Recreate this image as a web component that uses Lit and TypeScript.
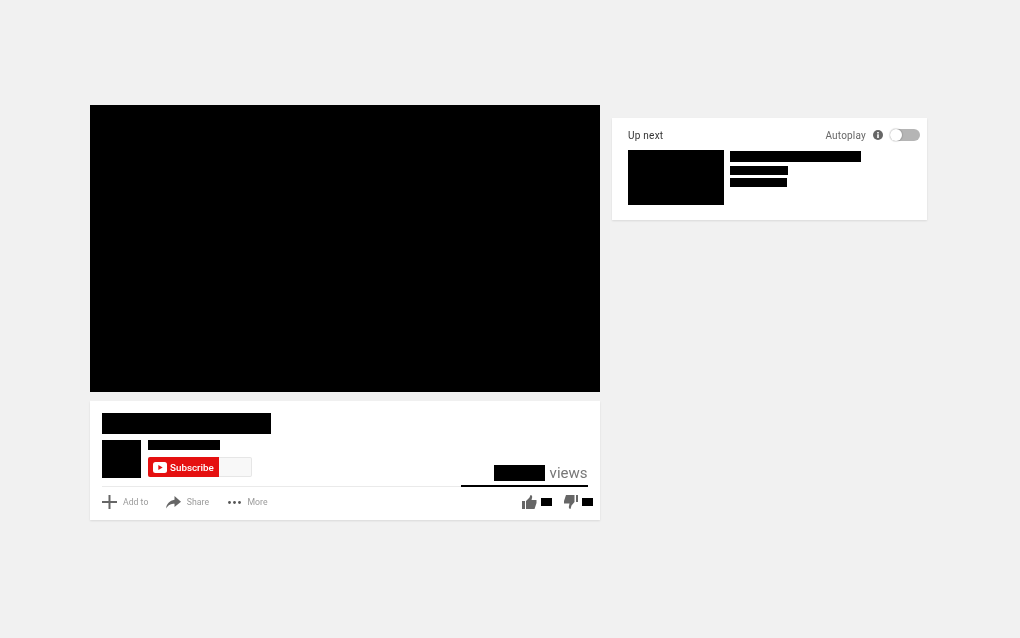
import { LitElement, html, css } from "lit";
import { customElement } from "lit/decorators.js";

@customElement("app-root")
export class AppRoot extends LitElement {
  static styles = css`
    :host { display: block; width: 1020px; height: 638px; background: #f1f1f1; font-family: Roboto, "Liberation Sans", sans-serif; overflow: hidden; }
    .page { display: flex; align-items: flex-start; gap: 12px; padding: 105px 0 0 90px; filter: blur(0.45px); }
    .main { width: 510px; display: flex; flex-direction: column; gap: 9px; }
    .video { height: 287px; background: #000; }
    .card { background: #fff; box-shadow: 0 1px 2px rgba(0,0,0,.1); }
    .info { padding: 12px 12px 0; height: 119px; box-sizing: border-box; }
    .black { background: #000; }
    .title { width: 169px; height: 21px; margin-bottom: 6px; }
    .meta { display: flex; justify-content: space-between; align-items: flex-end; height: 47px; box-sizing: border-box; width: 486px; border-bottom: 1px solid #eaeaea; }
    .channel { display: flex; gap: 7px; align-self: flex-start; }
    .avatar { width: 39px; height: 38px; }
    .chan-text { display: flex; flex-direction: column; gap: 7px; }
    .name { width: 72px; height: 10px; }
    .sub { display: flex; width: 104px; height: 20px; box-sizing: border-box; border: 1px solid #e6e6e6; border-left: 0; border-radius: 2px; background: #f8f8f8; }
    .sub-btn { width: 71px; margin: -1px 0; background: #e51010; color: #fff; font-size: 9.8px; font-weight: 500; display: flex; align-items: center; gap: 3px; padding-left: 5px; box-sizing: border-box; border-radius: 2px 0 0 2px; }
    .views-box { width: 127px; height: 20px; margin-bottom: -1px; border-bottom: 2px solid #000; display: flex; justify-content: flex-end; align-items: flex-start; gap: 5px; box-sizing: content-box; }
    .views-num { width: 51px; height: 16px; }
    .views { color: #777; font-size: 15px; line-height: 17px; margin-right: 0.5px; }
    .actions { display: flex; align-items: center; justify-content: space-between; height: 30px; width: 491px; }
    .left-acts { display: flex; align-items: center; gap: 17.5px; }
    .act { display: flex; align-items: center; gap: 6px; color: #9a9a9a; font-size: 8.7px; }
    .dots { margin-left: 2px; }
    .right-acts { display: flex; align-items: center; }
    .rate { width: 11px; height: 8px; margin-left: 4px; }
    .right-acts svg:nth-of-type(2) { margin-left: 12px; }
    .side { margin-top: 13px; width: 315px; height: 102px; box-sizing: border-box; padding: 10px 7px 0 16px; }
    .side-head { display: flex; align-items: center; justify-content: space-between; height: 14px; margin-bottom: 8px; }
    .upnext { font-size: 10px; color: #333; font-weight: 400; letter-spacing: 0.25px; }
    .auto { display: flex; align-items: center; gap: 7px; color: #666; font-size: 10px; letter-spacing: 0.2px; }
    .toggle { width: 30px; height: 12px; border-radius: 6px; background: #b5b5b5; position: relative; }
    .knob { position: absolute; left: 0; top: 0; width: 12px; height: 12px; border-radius: 50%; background: #fff; box-shadow: 0 0 1px 1px rgba(0,0,0,.12); }
    .item { display: flex; gap: 6px; }
    .thumb { width: 96px; height: 54.5px; }
    .lines { display: flex; flex-direction: column; padding-top: 1px; }
    .l1 { width: 131px; height: 11px; margin-bottom: 4px; }
    .l2 { width: 58px; height: 9px; margin-bottom: 3px; }
    .l3 { width: 57px; height: 9px; }
  `;

  render() {
    return html`
      <div class="page">
        <div class="main">
          <div class="video"></div>
          <div class="card info">
            <div class="black title"></div>
            <div class="meta">
              <div class="channel">
                <div class="black avatar"></div>
                <div class="chan-text">
                  <div class="black name"></div>
                  <div class="sub">
                    <div class="sub-btn">
                      <svg width="14" height="11" viewBox="0 0 14 11"><rect width="14" height="11" rx="2.5" fill="#fff"/><path d="M5.3 2.9v5.2L9.7 5.500z" fill="#e51010"/></svg>
                      Subscribe
                    </div>
                  </div>
                </div>
              </div>
              <div class="views-box">
                <div class="black views-num"></div>
                <div class="views">views</div>
              </div>
            </div>
            <div class="actions">
              <div class="left-acts">
                <div class="act">
                  <svg width="15" height="14" viewBox="0 0 15 14"><path d="M6.5 0h2v6h6.500v2h-6.500v6h-2v-6h-6.500v-2h6.500z" fill="#666"/></svg>
                  Add to
                </div>
                <div class="act">
                  <svg width="15" height="13" viewBox="0 0 15 13"><path d="M8.500 0l6.500 5.800-6.500 5.200v-3.200c-3.500 0-6 1-8.500 4.700 .6-4.700 3.500-8 8.500-8.800z" fill="#666"/></svg>
                  Share
                </div>
                <div class="act">
                  <svg class="dots" width="13" height="3" viewBox="0 0 13 3"><circle cx="1.500" cy="1.500" r="1.400" fill="#555"/><circle cx="6.500" cy="1.500" r="1.400" fill="#555"/><circle cx="11.500" cy="1.500" r="1.400" fill="#555"/></svg>
                  More
                </div>
              </div>
              <div class="right-acts">
                <svg width="15" height="14" viewBox="0 0 15 14"><path d="M0 6h3v8h-3zM4 6l3.500-3.500 1-2.500c1.500 0 2 1.500 1.500 3l-.5 2h5v3l-2 6h-8.500z" fill="#666"/></svg>
                <div class="black rate"></div>
                <svg width="14" height="14" viewBox="0 0 14 14"><path d="M12 0h2v7h-2zM10.500 0v7l-3 3.500-1 3.500c-1.500 0-2-1.500-1.500-3l.5-2.500h-5.500v-2.500l2-6z" fill="#666"/></svg>
                <div class="black rate"></div>
              </div>
            </div>
          </div>
        </div>
        <div class="card side">
          <div class="side-head">
            <div class="upnext">Up next</div>
            <div class="auto">
              Autoplay
              <svg width="10" height="10" viewBox="0 0 10 10"><circle cx="5" cy="5" r="5" fill="#666"/><path d="M4.200 2h1.600v1.400h-1.600zM4.200 4.200h1.600v3.800h-1.600z" fill="#fff"/></svg>
              <div class="toggle"><div class="knob"></div></div>
            </div>
          </div>
          <div class="item">
            <div class="black thumb"></div>
            <div class="lines">
              <div class="black l1"></div>
              <div class="black l2"></div>
              <div class="black l3"></div>
            </div>
          </div>
        </div>
      </div>
    `;
  }
}
